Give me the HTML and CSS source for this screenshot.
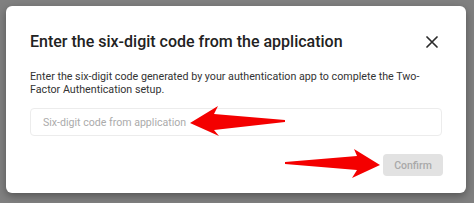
FILE: index.html
```html
<!DOCTYPE html>
<html lang="en">
<head>
  <meta charset="UTF-8" />
  <meta name="viewport" content="width=device-width, initial-scale=1.0" />
  <title>Two-Factor Authentication</title>
  <link rel="stylesheet" href="styles.css">
</head>
<body>
  <div class="backdrop">
    <div class="dialog">
      <div class="dialog-header">
        <h2>Enter the six-digit code from the application</h2>
        <button class="close" aria-label="Close">
          <svg width="12" height="12" viewBox="0 0 12 12">
            <path d="M1 1 L11 11 M11 1 L1 11" stroke="#2b2b2b" stroke-width="1.7" stroke-linecap="round" />
          </svg>
        </button>
      </div>
      <p class="hint">Enter the six-digit code generated by your authentication app to complete the Two-Factor Authentication setup.</p>
      <input class="code-input" type="text" placeholder="Six-digit code from application">
      <div class="dialog-footer">
        <button class="confirm" disabled>Confirm</button>
      </div>
    </div>
  </div>

  <!-- annotation arrows drawn over the screenshot -->
  <svg class="arrows" width="474" height="203" viewBox="0 0 474 203">
    <polygon fill="#f40000" points="190,123 218,106 214,114 285,120 285,122 214,130 219,136" />
    <polygon fill="#f40000" points="380,165 352,178 357,170 285,164 285,162 357,156 354,149" />
  </svg>
</body>
</html>
```

FILE: styles.css
```css
html, body {
  margin: 0;
  padding: 0;
  height: 100%;
  font-family: Roboto, "Noto Sans", Arial, sans-serif;
}
.backdrop {
  min-height: 100%;
  box-sizing: border-box;
  background-color: #808080;
  padding: 6px 8px 10px 6px;
}
.dialog {
  width: 460px;
  box-sizing: border-box;
  background-color: #fff;
  border-radius: 6px;
  box-shadow: 0 3px 8px rgba(0, 0, 0, 0.35);
  padding: 24px 24px 17px 24px;
}
.dialog-header {
  display: flex;
  align-items: center;
  justify-content: space-between;
  height: 24px;
}
.dialog-header h2 {
  margin: 0;
  font-size: 16px;
  font-weight: 500;
  color: #222;
  line-height: 24px;
}
.close {
  width: 24px;
  height: 24px;
  margin-right: -2px;
  padding: 0;
  border: none;
  background: none;
  display: flex;
  align-items: center;
  justify-content: center;
  cursor: pointer;
}
.hint {
  margin: 16px 0 12px 0;
  font-size: 10.7px;
  line-height: 13px;
  color: #333;
}
.code-input {
  display: block;
  width: 100%;
  height: 28px;
  box-sizing: border-box;
  border: 1px solid #ececec;
  border-radius: 4px;
  padding: 0 12px;
  font-family: inherit;
  font-size: 10.6px;
  color: #333;
}
.code-input::placeholder {
  color: #ababab;
}
.dialog-footer {
  display: flex;
  justify-content: flex-end;
  margin-top: 18px;
}
.confirm {
  width: 60px;
  height: 22px;
  margin-right: -1px;
  border: none;
  border-radius: 4px;
  background-color: #e2e2e2;
  color: #a9a9a9;
  font-family: inherit;
  font-size: 10.5px;
  font-weight: 500;
}
.arrows {
  position: absolute;
  left: 0;
  top: 0;
  pointer-events: none;
}
```
